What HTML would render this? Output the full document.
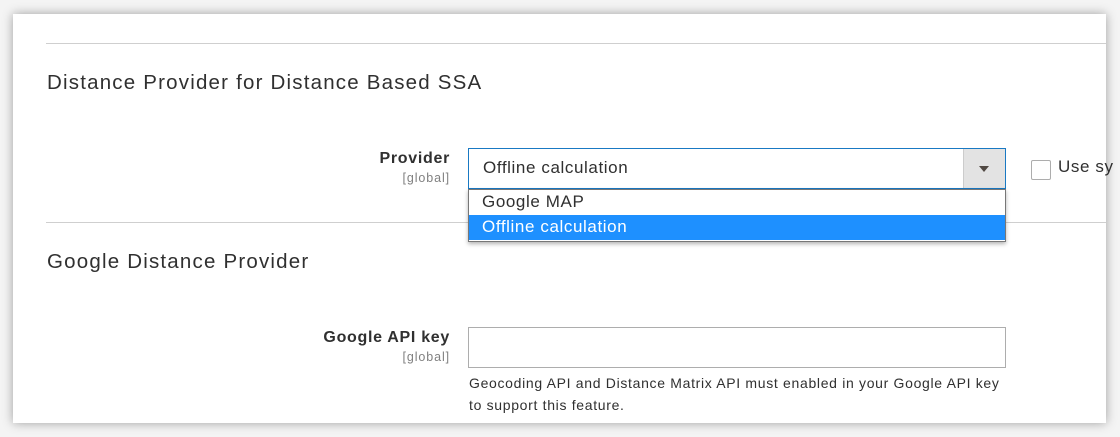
<!DOCTYPE html>
<html><head><style>
body{margin:0;width:1120px;height:437px;background:#f4f4f4;overflow:hidden;font-family:"Liberation Sans",sans-serif;color:#303030;position:relative}
.panel{position:absolute;left:13px;top:14px;width:1093px;height:409px;background:#fff;box-shadow:0 0 10px rgba(0,0,0,.35)}
.a{position:absolute;white-space:nowrap}
.hr{position:absolute;left:46px;width:1060px;height:1px;background:#cfcfcf}
h2{position:absolute;margin:0;font-weight:normal;font-size:20.5px;color:#303030;left:47px;letter-spacing:1.2px;white-space:nowrap}
.lbl{position:absolute;right:670px;text-align:right;font-size:16px;font-weight:bold;color:#303030;letter-spacing:.7px}
.sc{position:absolute;right:670px;font-size:12.5px;color:#808080;letter-spacing:.9px}
.f{font-size:17px;letter-spacing:.6px}
</style></head><body>
<div class="panel"></div>
<div class="hr" style="top:43px"></div>
<h2 style="top:71px">Distance Provider for Distance Based SSA</h2>
<div class="lbl" style="top:150px">Provider</div>
<div class="sc" style="top:171px">[global]</div>
<div class="a" style="left:468px;top:148px;width:536px;height:39px;border:1px solid #1979c3;background:#fff"></div>
<div class="a f" style="left:483px;top:158px">Offline calculation</div>
<div class="a" style="left:963px;top:149px;width:41px;height:39px;background:#e3e3e3;border-left:1px solid #ccc"></div>
<div class="a" style="left:979px;top:166px;width:0;height:0;border-left:5px solid transparent;border-right:5px solid transparent;border-top:6px solid #514943"></div>
<div class="a" style="left:1031px;top:160px;width:18px;height:18px;border:1px solid #adadad;border-radius:2px;background:#fff"></div>
<div class="a f" style="left:1058px;top:157px">Use sy</div>
<div class="hr" style="top:222px"></div>
<div class="a" style="left:468px;top:189px;width:536px;height:51px;border:1px solid #777;background:#fff;box-shadow:0 2px 4px rgba(0,0,0,.3)"></div>
<div class="a" style="left:469px;top:215px;width:536px;height:25px;background:#1e90ff"></div>
<div class="a f" style="left:482px;top:192px">Google MAP</div>
<div class="a f" style="left:482px;top:217px;color:#fff">Offline calculation</div>
<h2 style="top:250px">Google Distance Provider</h2>
<div class="lbl" style="top:329px">Google API key</div>
<div class="sc" style="top:350px">[global]</div>
<div class="a" style="left:468px;top:327px;width:536px;height:39px;border:1px solid #adadad;background:#fff"></div>
<div class="a" style="left:469px;top:372px;font-size:14px;line-height:22px;color:#303030;letter-spacing:.68px">Geocoding API and Distance Matrix API must enabled in your Google API key<br>to support this feature.</div>
</body></html>
